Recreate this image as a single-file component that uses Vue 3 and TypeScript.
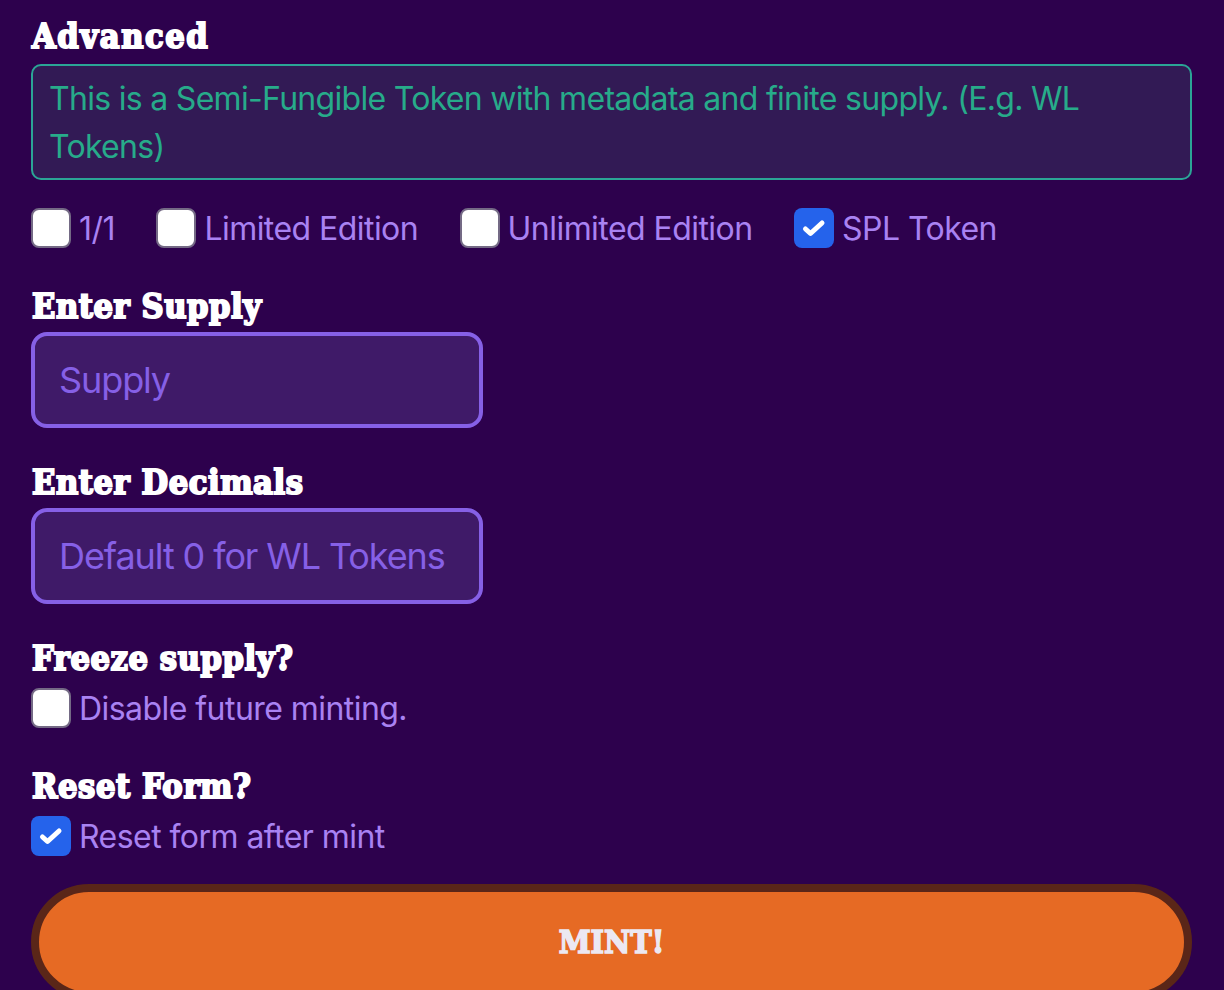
<script setup lang="ts">
interface Choice { label: string; checked: boolean }
const kinds: Choice[] = [
  { label: '1/1', checked: false },
  { label: 'Limited Edition', checked: false },
  { label: 'Unlimited Edition', checked: false },
  { label: 'SPL Token', checked: true },
]
</script>

<template>
  <main class="form">
    <h2 class="heading first">Advanced</h2>
    <div class="notice">This is a Semi-Fungible Token with metadata and finite supply. (E.g. WL Tokens)</div>

    <div class="kinds">
      <label v-for="k in kinds" :key="k.label" class="choice">
        <span class="box" :class="{ on: k.checked }">
          <svg v-if="k.checked" viewBox="0 0 40 40" class="tick"><path d="M11.5 21 L16.5 25.5 L28 15" /></svg>
        </span>
        <span class="choice-text">{{ k.label }}</span>
      </label>
    </div>

    <h2 class="heading wide">Enter Supply</h2>
    <input class="field" placeholder="Supply" />

    <h2 class="heading">Enter Decimals</h2>
    <input class="field" placeholder="Default 0 for WL Tokens" />

    <h2 class="heading over-check">Freeze supply?</h2>
    <label class="choice">
      <span class="box"></span>
      <span class="choice-text">Disable future minting.</span>
    </label>

    <h2 class="heading wide over-check">Reset Form?</h2>
    <label class="choice">
      <span class="box on">
        <svg viewBox="0 0 40 40" class="tick"><path d="M11.5 21 L16.5 25.5 L28 15" /></svg>
      </span>
      <span class="choice-text">Reset form after mint</span>
    </label>

    <button class="mint">MINT!</button>
  </main>
</template>

<style scoped>
.form {
  display: flex;
  flex-direction: column;
  align-items: flex-start;
  height: 990px;
  box-sizing: border-box;
  overflow: hidden;
  padding: 0 32px 0 31px;
  background: #2d014d;
  font-family: Inter, "Liberation Sans", sans-serif;
  font-size: 32px;
  line-height: 40px;
  color: #a982f2;
}
.form > * { flex: none; }
.heading {
  margin: 36px 0 8px;
  padding-left: 1px;
  font-family: "DejaVu Serif Condensed", "DejaVu Serif", serif;
  font-stretch: condensed;
  font-weight: 700;
  font-size: 34px;
  letter-spacing: 0.6px;
  line-height: 36px;
  height: 36px;
  color: #fff;
  -webkit-text-stroke: 2px #fff;
  white-space: nowrap;
}
.heading.wide { margin-top: 40px; }
.heading.over-check { margin-bottom: 12px; }
.heading.first { margin-top: 18px; margin-bottom: 10px; letter-spacing: 1.6px; }
.notice {
  box-sizing: border-box;
  width: 100%;
  height: 116px;
  padding: 9px 16px 8px;
  border: 2px solid #2ba596;
  border-radius: 10px;
  background: #321a55;
  color: #27ab8a;
  font-size: 32px;
  letter-spacing: -0.7px;
  line-height: 48px;
}
.kinds {
  display: flex;
  gap: 41.5px;
  margin-top: 28px;
}
.choice {
  display: flex;
  align-items: center;
  gap: 8px;
  height: 40px;
  white-space: nowrap;
  font-size: 32px;
  letter-spacing: -0.55px;
}
.choice-text { padding-top: 2px; }
.box {
  box-sizing: border-box;
  width: 40px;
  height: 40px;
  flex: none;
  border: 2px solid #746a85;
  border-radius: 8px;
  background: #fff;
}
.box.on { border: 0; background: #2563eb; }
.tick { display: block; width: 40px; height: 40px; }
.tick path { fill: none; stroke: #fff; stroke-width: 5; stroke-linecap: round; stroke-linejoin: round; }
.field {
  box-sizing: border-box;
  width: 452px;
  height: 96px;
  padding: 0 24px;
  border: 4px solid #8660e6;
  border-radius: 16px;
  background: #3f1a68;
  color: #8b5fe8;
  font: inherit;
  font-size: 36px;
  letter-spacing: -1.1px;
  outline: none;
}
.field::placeholder { color: #8660e6; opacity: 1; }
.mint {
  box-sizing: border-box;
  width: 100%;
  height: 116px;
  margin-top: 28px;
  border: 8px solid #5a2618;
  border-radius: 58px;
  background: #e66a24;
  color: #ece8f2;
  font-family: "DejaVu Serif Condensed", "DejaVu Serif", serif;
  font-stretch: condensed;
  font-weight: 700;
  font-size: 32px;
  -webkit-text-stroke: 1.5px #ece8f2;
}
</style>
<style>
html, body { margin: 0; background: #2d014d; }
</style>
